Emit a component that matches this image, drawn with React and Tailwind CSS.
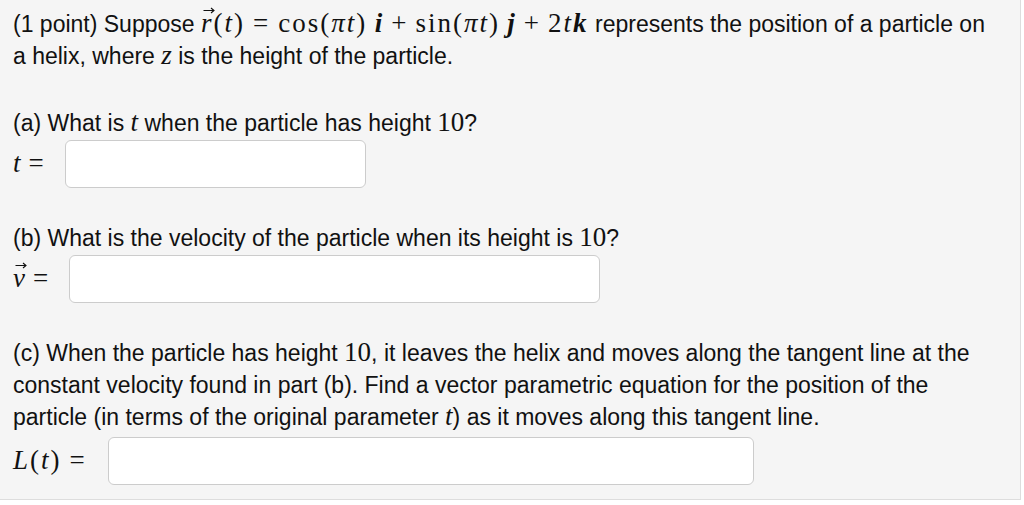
import React from 'react';

const sans = { fontFamily: '"Liberation Sans", Arial, sans-serif' };

function M({ children, className = '' }) {
  return (
    <span className={`text-[27px] leading-none ${className}`} style={{ fontFamily: '"Liberation Serif", "Times New Roman", serif' }}>
      {children}
    </span>
  );
}

function I({ children }) {
  return <span className="italic">{children}</span>;
}

function B({ children }) {
  return <span className="italic font-bold">{children}</span>;
}

// relation / binary operator spacing, roughly as TeX lays them out
function Rel({ children }) {
  return <span className="px-[8px]">{children}</span>;
}

function Bin({ children }) {
  return <span className="px-[7px]">{children}</span>;
}

function Vec({ children }) {
  return (
    <span className="relative inline-block">
      <svg className="absolute left-[2px] top-[-3px]" width="12" height="7" viewBox="0 0 12 7">
        <path d="M0.5 3.5 H10.5 M8 1 L11 3.5 L8 6" stroke="#111" strokeWidth="1.1" fill="none" />
      </svg>
      <I>{children}</I>
    </span>
  );
}

function AnswerRow({ label, width }) {
  return (
    <div className="flex items-center">
      <div className="pr-[13px] whitespace-nowrap">{label}</div>
      <input
        type="text"
        className="h-[48px] rounded-[6px] border border-[#cccccc] bg-white outline-none"
        style={{ width }}
      />
    </div>
  );
}

export default function App() {
  return (
    <div className="min-h-[505px] bg-white">
      <div
        className="w-[1021px] h-[500px] bg-[#f5f5f5] border-r border-b border-[#dddddd] pl-[13px] pr-[26px] pt-[8px] text-[23px] leading-[32px] text-[#111]"
        style={sans}
      >
        <p>
          (1 point) Suppose{' '}
          <M className="tracking-[2px]">
            <Vec>r</Vec>(<I>t</I>)<Rel>=</Rel>cos(<I>πt</I>)&thinsp;<B>i</B><Bin>+</Bin>sin(<I>πt</I>)&thinsp;<B>j</B>
            <Bin>+</Bin>2<I>t</I><B>k</B>
          </M>{' '}
          represents the position of a particle on a helix, where <M><I>z</I></M> is the height of the particle.
        </p>

        <div className="mt-[35px]">
          <p>
            (a) What is <M><I>t</I></M> when the particle has height <M>10</M>?
          </p>
          <div className="mt-[1px]">
            <AnswerRow label={<M><I>t</I><Rel>=</Rel></M>} width={301} />
          </div>
        </div>

        <div className="mt-[34px]">
          <p>
            (b) What is the velocity of the particle when its height is <M>10</M>?
          </p>
          <div className="mt-[1px]">
            <AnswerRow label={<M><Vec>v</Vec><Rel>=</Rel></M>} width={531} />
          </div>
        </div>

        <div className="mt-[34px]">
          <p>
            (c) When the particle has height <M>10</M>, it leaves the helix and moves along the tangent line at the
            constant velocity found in part (b). Find a vector parametric equation for the position of the
            particle (in terms of the original parameter <M><I>t</I></M>) as it moves along this tangent line.
          </p>
          <div className="mt-[4px]">
            <AnswerRow label={<M className="tracking-[2px]"><I>L</I>(<I>t</I>)<Rel>=</Rel></M>} width={646} />
          </div>
        </div>
      </div>
    </div>
  );
}
